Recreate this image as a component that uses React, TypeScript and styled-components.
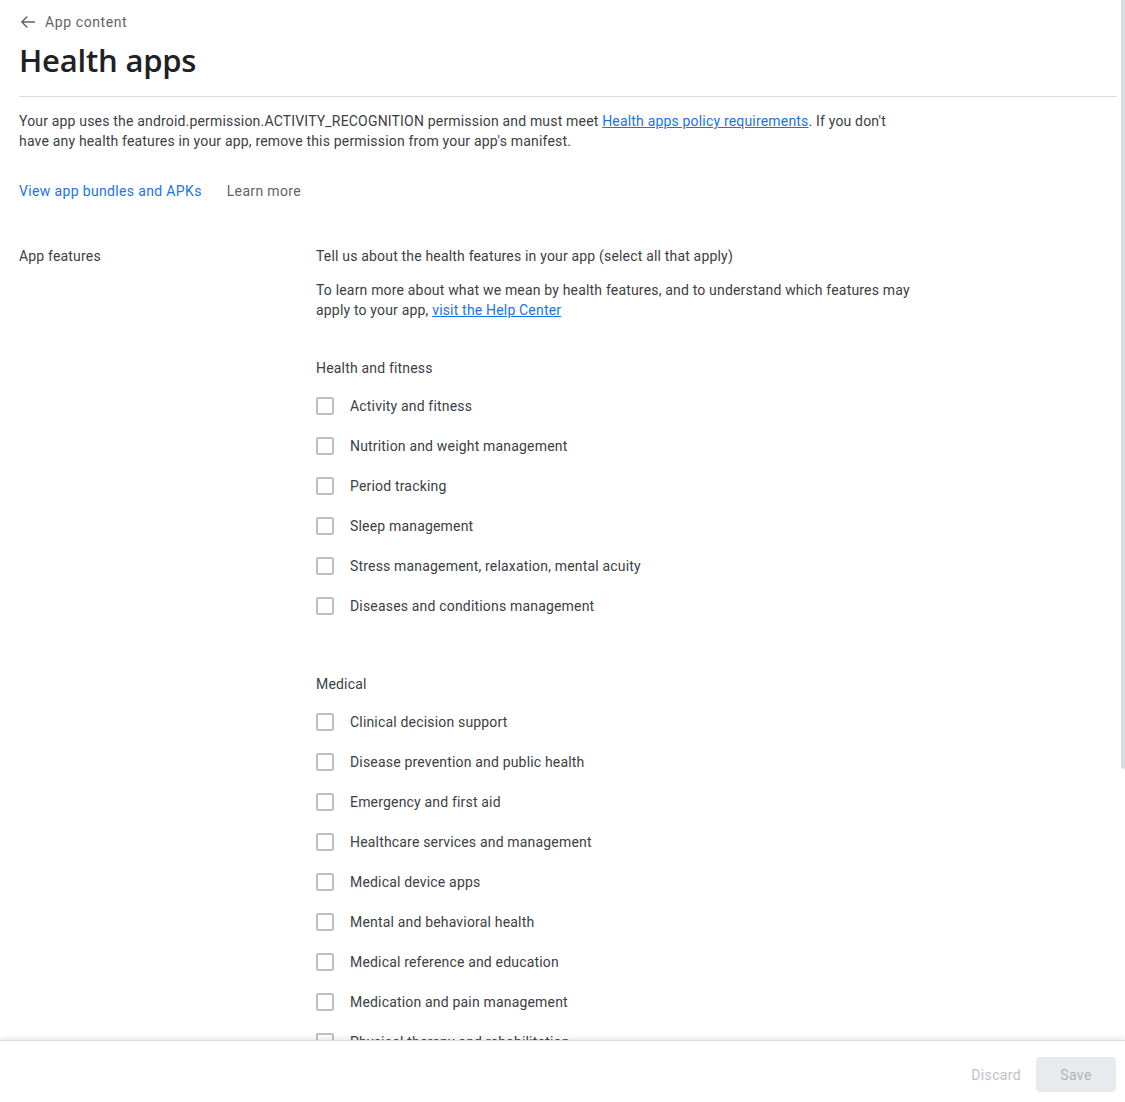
import React from "react";
import styled, { createGlobalStyle } from "styled-components";

const Global = createGlobalStyle`
  html, body { margin: 0; padding: 0; height: 100%; background: #fff; }
  body { font-family: Roboto, "Noto Sans", Arial, sans-serif; color: #3c4043; }
  #root { height: 100%; }
  * { box-sizing: border-box; }
`;

const Page = styled.div`
  position: relative;
  height: 100vh;
  display: flex;
  flex-direction: column;
  overflow: hidden;
`;

const Scroller = styled.div`
  flex: 1;
  overflow: hidden;
  padding: 12px 8px 0 19px;
`;

const ScrollThumb = styled.div`
  position: absolute;
  top: 0;
  right: 0;
  width: 4px;
  height: 769px;
  background: #dadce0;
  border-radius: 0 0 2px 2px;
`;

const BackLink = styled.a`
  display: flex;
  align-items: center;
  gap: 9px;
  height: 20px;
  font-size: 14px;
  letter-spacing: 0.6px;
  color: #5f6368;
  text-decoration: none;
  svg { margin-left: 1px; }
`;

const Title = styled.h1`
  margin: 8px 0 0;
  font-family: "Open Sans", Roboto, sans-serif;
  font-weight: 600;
  font-size: 31px;
  line-height: 40px;
  color: #202124;
  letter-spacing: -0.2px;
`;

const Divider = styled.hr`
  margin: 16px 0 0;
  border: 0;
  border-top: 1px solid #dadce0;
`;

const Paragraph = styled.p<{ $top?: number; $width?: number }>`
  margin: ${(p) => p.$top ?? 0}px 0 0;
  font-size: 14px;
  line-height: 20px;
  letter-spacing: 0.18px;
  max-width: ${(p) => p.$width ?? 900}px;
  color: #3c4043;
`;

const TextLink = styled.a`
  color: #1a73e8;
  text-decoration: underline;
`;

const Actions = styled.div`
  display: flex;
  gap: 25px;
  margin-top: 30px;
  height: 20px;
  align-items: center;
`;

const ActionLink = styled.a<{ $primary?: boolean }>`
  font-size: 14px;
  letter-spacing: 0.35px;
  color: ${(p) => (p.$primary ? "#1a73e8" : "#5f6368")};
  text-decoration: none;
`;

const Section = styled.div`
  display: grid;
  grid-template-columns: 297px 1fr;
  margin-top: 45px;
`;

const SectionLabel = styled.div`
  font-size: 14px;
  line-height: 20px;
  letter-spacing: 0.18px;
  color: #3c4043;
`;

const Column = styled.div`
  display: flex;
  flex-direction: column;
`;

const GroupTitle = styled.div<{ $top: number }>`
  margin-top: ${(p) => p.$top}px;
  font-size: 14px;
  line-height: 20px;
  letter-spacing: 0.18px;
  color: #3c4043;
`;

const List = styled.div`
  display: flex;
  flex-direction: column;
  margin-top: 8px;
`;

const Row = styled.label`
  display: flex;
  align-items: center;
  gap: 16px;
  height: 40px;
  font-size: 14px;
  letter-spacing: 0.18px;
  color: #3c4043;
`;

const Box = styled.span`
  width: 18px;
  height: 18px;
  border: 2px solid #bdc1c6;
  border-radius: 2px;
  flex: none;
`;

const Footer = styled.footer`
  position: relative;
  flex: none;
  height: 62px;
  display: flex;
  justify-content: flex-end;
  align-items: center;
  gap: 7px;
  padding: 6px 9px 0 0;
  background: #fff;
  border-top: 1px solid #dadce0;
  box-shadow: 0 -2px 5px rgba(60, 64, 67, 0.12);
  z-index: 1;
`;

const GhostButton = styled.button`
  border: 0;
  background: transparent;
  font-family: Roboto, sans-serif;
  font-size: 14px;
  letter-spacing: 0.35px;
  color: #bdc1c6;
  padding: 0 8px;
  height: 35px;
`;

const FilledButton = styled.button`
  border: 0;
  border-radius: 4px;
  background: #e8eaed;
  color: #b0b3b8;
  font-family: Roboto, sans-serif;
  font-size: 14px;
  letter-spacing: 0.35px;
  width: 80px;
  height: 35px;
`;

const health = [
  "Activity and fitness",
  "Nutrition and weight management",
  "Period tracking",
  "Sleep management",
  "Stress management, relaxation, mental acuity",
  "Diseases and conditions management",
];

const medical = [
  "Clinical decision support",
  "Disease prevention and public health",
  "Emergency and first aid",
  "Healthcare services and management",
  "Medical device apps",
  "Mental and behavioral health",
  "Medical reference and education",
  "Medication and pain management",
  "Physical therapy and rehabilitation",
  "Other medical features",
];

export default function App() {
  return (
    <Page>
      <Global />
      <Scroller>
        <BackLink href="#">
          <svg width="16" height="16" viewBox="0 0 16 16" fill="none" stroke="#5f6368" strokeWidth="1.4">
            <path d="M15 8H1.8M7.3 2.5L1.8 8l5.5 5.5" />
          </svg>
          App content
        </BackLink>
        <Title>Health apps</Title>
        <Divider />
        <Paragraph $top={14}>
          Your app uses the android.permission.ACTIVITY_RECOGNITION permission and must meet{" "}
          <TextLink href="#">Health apps policy requirements</TextLink>. If you don't have any health
          features in your app, remove this permission from your app's manifest.
        </Paragraph>
        <Actions>
          <ActionLink href="#" $primary>
            View app bundles and APKs
          </ActionLink>
          <ActionLink href="#">Learn more</ActionLink>
        </Actions>
        <Section>
          <SectionLabel>App features</SectionLabel>
          <Column>
            <SectionLabel>Tell us about the health features in your app (select all that apply)</SectionLabel>
            <Paragraph $top={14} $width={600}>
              To learn more about what we mean by health features, and to understand which features may
              apply to your app, <TextLink href="#">visit the Help Center</TextLink>
            </Paragraph>
            <GroupTitle $top={38}>Health and fitness</GroupTitle>
            <List>
              {health.map((h) => (
                <Row key={h}>
                  <Box />
                  {h}
                </Row>
              ))}
            </List>
            <GroupTitle $top={48}>Medical</GroupTitle>
            <List>
              {medical.map((h) => (
                <Row key={h}>
                  <Box />
                  {h}
                </Row>
              ))}
            </List>
          </Column>
        </Section>
      </Scroller>
      <ScrollThumb />
      <Footer>
        <GhostButton>Discard</GhostButton>
        <FilledButton>Save</FilledButton>
      </Footer>
    </Page>
  );
}
